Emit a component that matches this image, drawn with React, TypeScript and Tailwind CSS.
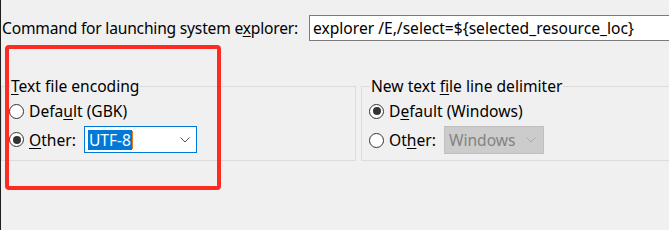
import React from 'react'

function Radio({ checked }: { checked?: boolean }) {
  return (
    <span className="flex h-[15px] w-[15px] shrink-0 items-center justify-center rounded-full border border-[#333333] bg-white">
      {checked && <span className="h-[8px] w-[8px] rounded-full bg-[#333333]" />}
    </span>
  )
}

function Chevron({ color }: { color: string }) {
  return (
    <svg width="10" height="6" viewBox="0 0 10 6" fill="none">
      <path d="M0.5 0.5 L5 5 L9.5 0.5" stroke={color} strokeWidth="1" />
    </svg>
  )
}

function U({ children }: { children: React.ReactNode }) {
  return <span className="underline decoration-1 underline-offset-[2px]">{children}</span>
}

export default function App() {
  return (
    <div
      className="relative flex h-[230px] w-[669px] overflow-hidden bg-[#f0f0f0] text-[15.6px] leading-[20px] text-black"
      style={{ fontFamily: '"Noto Sans", "Liberation Sans", sans-serif' }}
    >
      {/* window edge */}
      <div className="w-px shrink-0 bg-[#1e1e1e]" />

      <div className="flex min-w-0 flex-1 flex-col">
        {/* explorer command row */}
        <div className="mt-[15px] flex items-center">
          <span className="ml-px w-[297px] shrink-0 tracking-[-0.2px] whitespace-nowrap">
            Command for launching system e<U>x</U>plorer:
          </span>
          <div className="ml-[10px] flex h-[26px] w-[380px] shrink-0 items-center border border-[#7a7a7a] bg-white pl-[3px] whitespace-nowrap">
            <span>explorer /E,/select=${'{'}selected_resource_loc{'}'}</span>
          </div>
        </div>

        {/* group boxes */}
        <div className="mt-[35px] flex gap-[5px]">
          <fieldset className="w-[355px] shrink-0 border border-[#dcdcdc] pr-2 pb-[7px] pl-[7px]">
            <legend className="ml-px px-px">
              <U>T</U>ext file encoding
            </legend>
            <div className="mt-[5px] flex h-[20px] items-center gap-[5px]">
              <Radio />
              <span>
                Defa<U>u</U>lt (GBK)
              </span>
            </div>
            <div className="mt-[5px] flex h-[27px] items-center">
              <Radio checked />
              <span className="ml-[5px]">
                <U>O</U>ther:
              </span>
              <div className="ml-[8px] flex h-[27px] w-[113px] items-center border border-[#0078d7] bg-white pr-[6px] pl-[3px]">
                <span className="bg-[#0078d7] px-px text-white">UTF-8</span>
                <span className="h-[18px] w-px bg-[#e07a1f]" />
                <span className="ml-auto flex">
                  <Chevron color="#555555" />
                </span>
              </div>
            </div>
          </fieldset>

          <fieldset className="w-[330px] shrink-0 border border-[#dcdcdc] pr-2 pb-[6px] pl-[7px]">
            <legend className="ml-px px-px">
              New text <U>f</U>ile line delimiter
            </legend>
            <div className="mt-[5px] flex h-[20px] items-center gap-[5px]">
              <Radio checked />
              <span>
                D<U>e</U>fault (Windows)
              </span>
            </div>
            <div className="mt-[5px] flex h-[28px] items-center">
              <Radio />
              <span className="ml-[5px]">
                Ot<U>h</U>er:
              </span>
              <div className="ml-[8px] flex h-[28px] w-[100px] items-center border border-[#bfbfbf] bg-[#cccccc] pr-[7px] pl-[4px] text-[#838383]">
                <span>Windows</span>
                <span className="ml-auto flex">
                  <Chevron color="#a8a8a8" />
                </span>
              </div>
            </div>
          </fieldset>
        </div>
      </div>

      {/* red annotation box */}
      <div className="absolute top-[45px] left-[5px] h-[145px] w-[216px] rounded-[4px] border-4 border-[#fe2a24]" />
    </div>
  )
}
